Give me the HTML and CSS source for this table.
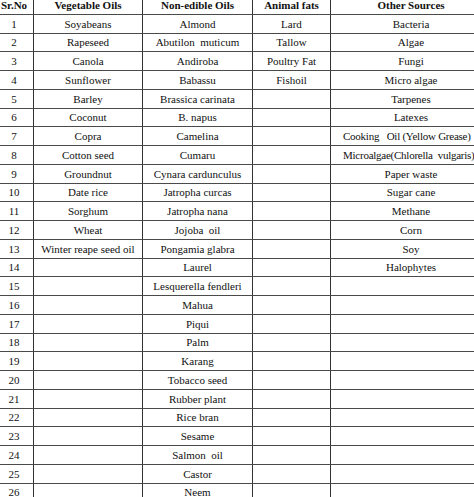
FILE: index.html
```html
<!DOCTYPE html>
<html>
<head>
<meta charset="utf-8">
<link rel="stylesheet" href="styles.css">
</head>
<body>
<div class="frame">
<table class="sources">
<colgroup>
<col class="c-no"><col class="c-veg"><col class="c-non"><col class="c-ani"><col class="c-oth">
</colgroup>
<thead>
<tr><th>Sr.No</th><th>Vegetable Oils</th><th>Non-edible Oils</th><th>Animal fats</th><th>Other Sources</th></tr>
</thead>
<tbody>
<tr><td>1</td><td>Soyabeans</td><td>Almond</td><td>Lard</td><td>Bacteria</td></tr>
<tr><td>2</td><td>Rapeseed</td><td class="pre">Abutilon  muticum</td><td>Tallow</td><td>Algae</td></tr>
<tr><td>3</td><td>Canola</td><td>Andiroba</td><td>Poultry Fat</td><td>Fungi</td></tr>
<tr><td>4</td><td>Sunflower</td><td>Babassu</td><td>Fishoil</td><td>Micro algae</td></tr>
<tr><td>5</td><td>Barley</td><td>Brassica carinata</td><td></td><td>Tarpenes</td></tr>
<tr><td>6</td><td>Coconut</td><td>B. napus</td><td></td><td>Latexes</td></tr>
<tr><td>7</td><td>Copra</td><td>Camelina</td><td></td><td class="pre tight">Cooking   Oil (Yellow Grease)</td></tr>
<tr><td>8</td><td>Cotton seed</td><td>Cumaru</td><td></td><td class="pre tight">Microalgae(Chlorella  vulgaris)</td></tr>
<tr><td>9</td><td>Groundnut</td><td>Cynara cardunculus</td><td></td><td>Paper waste</td></tr>
<tr><td>10</td><td>Date rice</td><td>Jatropha curcas</td><td></td><td>Sugar cane</td></tr>
<tr><td>11</td><td>Sorghum</td><td>Jatropha nana</td><td></td><td>Methane</td></tr>
<tr><td>12</td><td>Wheat</td><td class="pre">Jojoba  oil</td><td></td><td>Corn</td></tr>
<tr><td>13</td><td>Winter reape seed oil</td><td>Pongamia glabra</td><td></td><td>Soy</td></tr>
<tr><td>14</td><td></td><td>Laurel</td><td></td><td>Halophytes</td></tr>
<tr><td>15</td><td></td><td>Lesquerella fendleri</td><td></td><td></td></tr>
<tr><td>16</td><td></td><td>Mahua</td><td></td><td></td></tr>
<tr><td>17</td><td></td><td>Piqui</td><td></td><td></td></tr>
<tr><td>18</td><td></td><td>Palm</td><td></td><td></td></tr>
<tr><td>19</td><td></td><td>Karang</td><td></td><td></td></tr>
<tr><td>20</td><td></td><td>Tobacco seed</td><td></td><td></td></tr>
<tr><td>21</td><td></td><td>Rubber plant</td><td></td><td></td></tr>
<tr><td>22</td><td></td><td>Rice bran</td><td></td><td></td></tr>
<tr><td>23</td><td></td><td>Sesame</td><td></td><td></td></tr>
<tr><td>24</td><td></td><td class="pre">Salmon  oil</td><td></td><td></td></tr>
<tr><td>25</td><td></td><td>Castor</td><td></td><td></td></tr>
<tr><td>26</td><td></td><td>Neem</td><td></td><td></td></tr>
</tbody>
</table>
</div>
</body>
</html>
```
FILE: styles.css
```css
html, body {
  margin: 0;
  padding: 0;
  background: #ffffff;
}
body {
  width: 474px;
  height: 497px;
  overflow: hidden;
}
.frame {
  width: 474px;
  height: 497px;
  overflow: hidden;
}
.sources {
  border-collapse: collapse;
  table-layout: fixed;
  width: 497px;
  margin-left: -6px;
  margin-top: -5px;
  font-family: "Liberation Serif", "Times New Roman", serif;
  font-size: 11px;
  color: #111111;
}
.c-no { width: 39px; }
.c-veg { width: 109px; }
.c-non { width: 110px; }
.c-ani { width: 78px; }
.c-oth { width: 161px; }
.sources th,
.sources td {
  border: 1px solid #4a4a4a;
  border-left-width: 1.5px;
  border-right-width: 1.5px;
  border-left-color: #333333;
  border-right-color: #333333;
  padding: 0;
  height: 17.75px;
  line-height: 12px;
  text-align: center;
  vertical-align: middle;
  white-space: nowrap;
  overflow: hidden;
}
.sources th {
  font-weight: bold;
}
.pre {
  white-space: pre !important;
}
.sources td.tight {
  text-align: left;
  padding-left: 12px;
  letter-spacing: -0.25px;
}
```
